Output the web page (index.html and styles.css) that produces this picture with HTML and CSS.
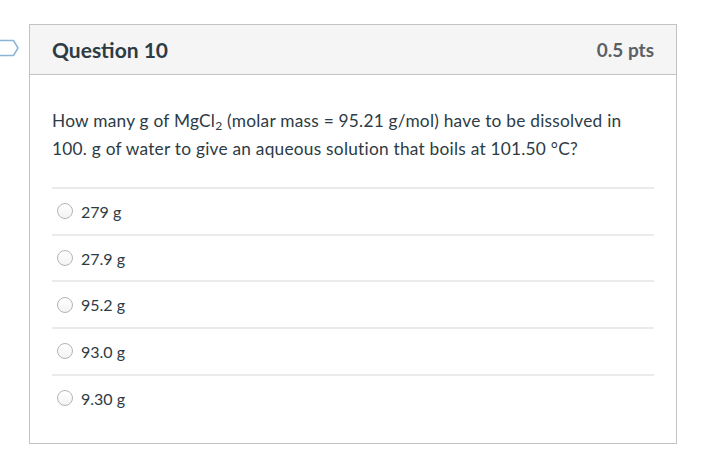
FILE: index.html
```html
<!DOCTYPE html>
<html lang="en">
<head>
<meta charset="utf-8">
<title>Question 10</title>
<link rel="stylesheet" href="styles.css">
</head>
<body>
<div class="page">
  <svg class="flag" width="20" height="18" viewBox="0 0 20 18" aria-hidden="true">
    <path d="M-2 1.5 H13.5 L18 9 L13.5 16.5 H-2" fill="none" stroke="#8db4d6" stroke-width="1.5" stroke-linejoin="round"/>
  </svg>
  <div class="card">
    <div class="card-header">
      <h2 class="title">Question 10</h2>
      <span class="pts">0.5 pts</span>
    </div>
    <div class="card-body">
      <p class="question">How many g of MgCl<sub>2</sub> (molar mass = 95.21 g/mol) have to be dissolved in 100. g of water to give an aqueous solution that boils at 101.50 °C?</p>
      <div class="answers">
        <label class="answer"><span class="radio"></span><span class="label">279 g</span></label>
        <label class="answer"><span class="radio"></span><span class="label">27.9 g</span></label>
        <label class="answer"><span class="radio"></span><span class="label">95.2 g</span></label>
        <label class="answer"><span class="radio"></span><span class="label">93.0 g</span></label>
        <label class="answer"><span class="radio"></span><span class="label">9.30 g</span></label>
      </div>
    </div>
  </div>
</div>
</body>
</html>
```
FILE: styles.css
```css
html, body {
  margin: 0;
  padding: 0;
  background: #ffffff;
}
body {
  font-family: Lato, "Open Sans", "Liberation Sans", sans-serif;
  color: #2d3b45;
}
.page {
  position: relative;
  padding: 24px 0 0 29px;
}
.flag {
  position: absolute;
  left: 0;
  top: 39px;
}
.card {
  width: 646px;
  border: 1px solid #c1c4c6;
  background: #fff;
}
.card-header {
  height: 49px;
  background: #f5f5f5;
  border-bottom: 1px solid #c1c4c6;
  display: flex;
  align-items: center;
  justify-content: space-between;
  padding: 0 22px;
}
.title {
  margin: 0;
  font-size: 21px;
  font-weight: 700;
  color: #2d3b45;
}
.pts {
  font-size: 19px;
  font-weight: 700;
  color: #5b6065;
}
.card-body {
  padding: 22px 22px 23px 22px;
}
.question {
  margin: 10px 0 24px;
  font-size: 17.3px;
  letter-spacing: 0.24px;
  line-height: 28px;
}
.question sub {
  font-size: 70%;
  line-height: 0;
  vertical-align: -0.25em;
}
.answers {
  display: flex;
  flex-direction: column;
}
.answer {
  display: flex;
  align-items: center;
  height: 44.7px;
  border-top: 2px solid #ebebeb;
  font-size: 16px;
}
.radio {
  width: 14px;
  height: 14px;
  border: 1px solid #b5b5b5;
  border-radius: 50%;
  margin: 0 8px 0 5px;
  background: linear-gradient(#ffffff, #f3f3f3);
}
.label {
  color: #2d3b45;
}
```
